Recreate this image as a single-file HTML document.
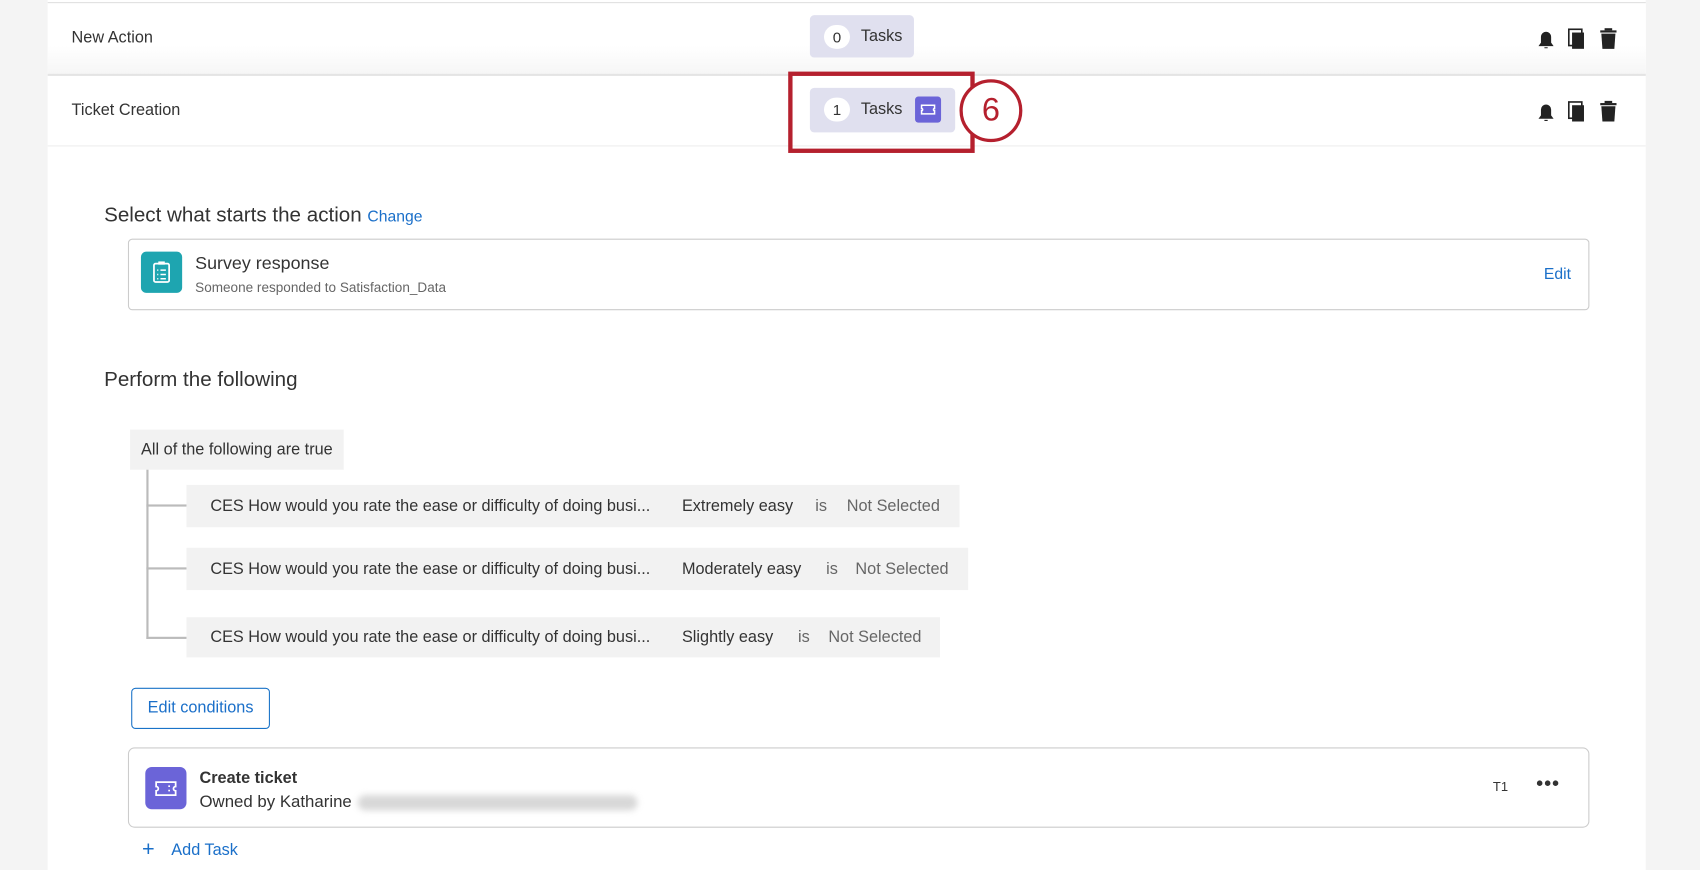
<!DOCTYPE html>
<html><head><meta charset="utf-8"><style>
html,body{margin:0;padding:0;width:1700px;height:870px;overflow:hidden;background:#f4f4f4;font-family:"Liberation Sans",sans-serif;color:#333}
#w{position:absolute;left:0;top:0;width:1568px;height:802px;transform:scale(1.08418,1.08479);transform-origin:0 0}
.a{position:absolute}
.panel{left:44px;top:0;width:1474px;height:802px;background:#fff}
.badge{background:#e0e0ef;border-radius:4px}
.num{background:#fff;border-radius:12px;width:24px;height:22px;text-align:center;line-height:22px;font-size:14px}
.cond{background:#f2f2f2;height:39px;font-size:15px;color:#333;line-height:39px}
.blue{color:#1a6fc9}
</style></head><body><div id="w">
<div class="a panel"></div>
<div class="a" style="left:44px;top:2px;width:1474px;height:1px;background:#ddd"></div>
<div class="a" style="left:44px;top:3px;width:1474px;height:65px;background:linear-gradient(#fff 60%,#f6f6f6)"></div>
<div class="a" style="left:44px;top:68px;width:1474px;height:2px;background:#e4e4e4"></div>
<div class="a" style="left:44px;top:134px;width:1474px;height:1px;background:#eee"></div>
<div class="a" style="left:66px;top:26px;font-size:15px">New Action</div>
<div class="a" style="left:66px;top:93px;font-size:15px">Ticket Creation</div>
<div class="a badge" style="left:747px;top:14px;width:96px;height:39px"></div>
<div class="a num" style="left:760px;top:23px">0</div>
<div class="a" style="left:794px;top:25px;font-size:15px">Tasks</div>
<div class="a badge" style="left:747px;top:81px;width:134px;height:41px"></div>
<div class="a num" style="left:760px;top:90px">1</div>
<div class="a" style="left:794px;top:92px;font-size:15px">Tasks</div>
<div class="a" style="left:844px;top:89px;width:24px;height:24px;background:#6b64d8;border-radius:3px"><svg width="24" height="24"><path d="M6 8h12v3a1 1 0 0 0 0 2v3H6v-3a1 1 0 0 0 0-2z" fill="none" stroke="#fff" stroke-width="1.4"/></svg></div>
<div class="a" style="left:727px;top:66px;width:164px;height:67px;border:4px solid #b5202e"></div>
<div class="a" style="left:885px;top:73px;width:52px;height:52px;border:3px solid #b5202e;border-radius:50%;background:#fff;color:#b5202e;font-size:30px;text-align:center;line-height:52px">6</div>
<svg class="a" style="left:1416px;top:25px" width="82" height="22">
<path d="M4 17h12l-1.8-2.5V9a4.2 4.2 0 0 0-8.4 0v5.5z M8.5 19h3" fill="#222" stroke="#222"/>
<rect x="31" y="2" width="12" height="15" fill="none" stroke="#222" stroke-width="1.5"/><rect x="34" y="5" width="11" height="15" fill="#222"/>
<rect x="60" y="3" width="15" height="2" fill="#222"/><rect x="64" y="1" width="7" height="2" fill="#222"/><path d="M61 6h13l-1 14h-11z" fill="#222"/>
</svg>
<svg class="a" style="left:1416px;top:92px" width="82" height="22">
<path d="M4 17h12l-1.8-2.5V9a4.2 4.2 0 0 0-8.4 0v5.5z M8.5 19h3" fill="#222" stroke="#222"/>
<rect x="31" y="2" width="12" height="15" fill="none" stroke="#222" stroke-width="1.5"/><rect x="34" y="5" width="11" height="15" fill="#222"/>
<rect x="60" y="3" width="15" height="2" fill="#222"/><rect x="64" y="1" width="7" height="2" fill="#222"/><path d="M61 6h13l-1 14h-11z" fill="#222"/>
</svg>
<div class="a" style="left:96px;top:188px;font-size:19px">Select what starts the action <span class="blue" style="font-size:14.5px">Change</span></div>
<div class="a" style="left:118px;top:220px;width:1346px;height:64px;border:1px solid #ccc;border-radius:4px"></div>
<div class="a" style="left:130px;top:232px;width:38px;height:38px;background:#1ea5b0;border-radius:5px"><svg width="38" height="38"><rect x="12" y="11" width="14" height="17" rx="1.5" fill="none" stroke="#fff" stroke-width="1.6"/><rect x="16" y="9" width="6" height="3" fill="#fff"/><path d="M15 17h1M18 17h5M15 21h1M18 21h5M15 25h1M18 25h5" stroke="#fff" stroke-width="1.4"/></svg></div>
<div class="a" style="left:180px;top:234px;font-size:16.5px">Survey response</div>
<div class="a" style="left:180px;top:258px;font-size:12.5px;color:#666">Someone responded to Satisfaction_Data</div>
<div class="a blue" style="left:1424px;top:245px;font-size:14.5px">Edit</div>
<div class="a" style="left:96px;top:340px;font-size:19px">Perform the following</div>
<div class="a cond" style="left:120px;top:396px;width:197px;height:37px;line-height:37px;text-align:center">All of the following are true</div>
<div class="a" style="left:135px;top:433px;width:2px;height:156px;background:#bbb"></div>
<div class="a" style="left:135px;top:465px;width:37px;height:2px;background:#bbb"></div>
<div class="a" style="left:135px;top:523px;width:37px;height:2px;background:#bbb"></div>
<div class="a" style="left:135px;top:587px;width:37px;height:2px;background:#bbb"></div>
<div class="a cond" style="left:172px;top:447px;width:713px"><span class="a" style="left:22px">CES How would you rate the ease or difficulty of doing busi...</span><span class="a" style="left:457px">Extremely easy</span><span class="a" style="left:580px;color:#666">is</span><span class="a" style="left:609px;color:#666">Not Selected</span></div>
<div class="a cond" style="left:172px;top:505px;width:721px"><span class="a" style="left:22px">CES How would you rate the ease or difficulty of doing busi...</span><span class="a" style="left:457px">Moderately easy</span><span class="a" style="left:590px;color:#666">is</span><span class="a" style="left:617px;color:#666">Not Selected</span></div>
<div class="a cond" style="left:172px;top:569px;width:695px;height:37px;line-height:37px"><span class="a" style="left:22px">CES How would you rate the ease or difficulty of doing busi...</span><span class="a" style="left:457px">Slightly easy</span><span class="a" style="left:564px;color:#666">is</span><span class="a" style="left:592px;color:#666">Not Selected</span></div>
<div class="a blue" style="left:121px;top:634px;width:126px;height:36px;border:1px solid #1a73c8;border-radius:4px;font-size:15px;text-align:center;line-height:36px">Edit conditions</div>
<div class="a" style="left:118px;top:689px;width:1346px;height:72px;border:1px solid #ccc;border-radius:6px"></div>
<div class="a" style="left:134px;top:707px;width:38px;height:39px;background:#6b64d8;border-radius:6px"><svg width="38" height="39"><path d="M10 14h18v4a2 2 0 0 0 0 4v4H10v-4a2 2 0 0 0 0-4z" fill="none" stroke="#fff" stroke-width="1.6"/><path d="M22 17v1.5M22 21v1.5" stroke="#fff" stroke-width="1.6"/></svg></div>
<div class="a" style="left:184px;top:709px;font-size:15px;font-weight:bold">Create ticket</div>
<div class="a" style="left:184px;top:731px;font-size:15.5px">Owned by Katharine</div>
<div class="a" style="left:330px;top:733px;width:258px;height:14px;background:#d8d8d8;border-radius:7px;filter:blur(3px)"></div>
<div class="a" style="left:1377px;top:718px;font-size:12px">T1</div>
<div class="a" style="left:1417px;top:712px;font-size:18px;font-weight:bold;letter-spacing:1px">•••</div>
<div class="a blue" style="left:131px;top:772px;font-size:20px">+</div>
<div class="a blue" style="left:158px;top:775px;font-size:15px">Add Task</div>
</div></body></html>
